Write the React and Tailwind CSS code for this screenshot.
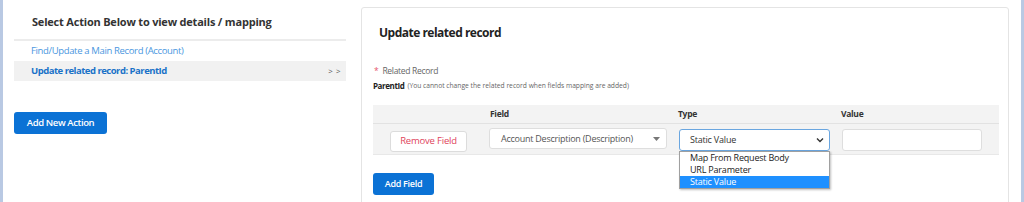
import React from "react";

const font = { fontFamily: '"Open Sans", "Noto Sans", sans-serif' };

export default function App() {
  return (
    <div className="w-[1024px] h-[202px] bg-white flex overflow-hidden text-[#333]" style={font}>
      <div className="w-[3px] h-full bg-[#b9c9e3] shrink-0" />
      {/* Left panel */}
      <div className="ml-[11px] w-[332px] shrink-0 flex flex-col">
        <div className="h-[39px] flex items-center pl-[18px] pt-[6px] text-[11px] font-bold text-[#333] tracking-[-0.2px] whitespace-nowrap">
          Select Action Below to view details / mapping
        </div>
        <div className="h-[2px] bg-[#ececec]" />
        <div className="h-[20px] flex items-center pl-[17px] text-[9.5px] tracking-[-0.35px] text-[#4a97e0] whitespace-nowrap">
          Find/Update a Main Record (Account)
        </div>
        <div className="h-[20px] flex items-center justify-between pl-[17px] pr-[5px] bg-[#f1f1f1]">
          <span className="font-bold text-[#1a72c8] text-[9.5px] tracking-[-0.5px] whitespace-nowrap">Update related record: ParentId</span>
          <span className="text-[#555] text-[8px] tracking-[0.5px]">&gt; &gt;</span>
        </div>
        <div className="mt-[27px]">
          <button className="w-[93px] h-[22px] rounded-[3px] bg-[#0b72d5] text-white text-[9.5px] tracking-[-0.4px] font-semibold">
            Add New Action
          </button>
        </div>
      </div>

      {/* Right card */}
      <div className="ml-[15px] mt-[7px] w-[648px] h-[220px] shrink-0 border border-[#e4e4e4] rounded-[3px] flex flex-col">
        <div className="pt-[15px] pl-[17px] h-[20px] box-content flex items-center text-[12px] tracking-[-0.5px] font-bold text-[#222]">
          Update related record
        </div>
        <div className="pl-[11px] flex flex-col">
          <div className="mt-[21px] h-[14px] flex items-center text-[8.5px] tracking-[-0.3px] text-[#666]">
            <span className="text-[#e5546a] mr-[4px] ml-[1px]">*</span>Related Record
          </div>
          <div className="mt-[1px] h-[14px] flex items-center whitespace-nowrap">
            <span className="text-[8px] tracking-[-0.4px] font-bold text-[#222]">ParentId</span>
            <span className="ml-[3px] text-[6.7px] text-[#666]">
              (You cannot change the related record when fields mapping are added)
            </span>
          </div>
          {/* table */}
          <div className="mt-[12px] w-[626px] bg-[#f3f3f3] relative">
            <div className="h-[19px] flex items-center text-[8.5px] tracking-[-0.3px] font-bold text-[#333] border-b border-[#e2e2e2]">
              <div className="w-[116px]" />
              <div className="w-[190px] pl-[1px]">Field</div>
              <div className="w-[163px] -ml-[1px]">Type</div>
              <div className="flex-1">Value</div>
            </div>
            <div className="h-[31px] flex items-center border-b border-[#e8e8e8]">
              <div className="w-[116px] pl-[17px]">
                <button className="w-[77px] h-[21px] bg-white border border-[#dcdcdc] rounded-[3px] text-[9.5px] tracking-[-0.2px] text-[#e0445c]">
                  Remove Field
                </button>
              </div>
              <div className="w-[190px]">
                <div className="w-[178px] h-[21px] -mt-[1px] bg-white border border-[#dedede] rounded-[3px] flex items-center justify-between pl-[11px] pr-[6px] text-[9px] tracking-[-0.25px] text-[#555] whitespace-nowrap">
                  <span>Account Description (Description)</span>
                  <svg width="7" height="4" viewBox="0 0 7 4"><path d="M0 0h7L3.5 4z" fill="#777" /></svg>
                </div>
              </div>
              <div className="w-[163px] relative">
                <div className="w-[151px] h-[22px] mt-[1px] bg-white border border-[#6aa6e0] rounded-[3px] flex items-center justify-between pl-[10px] pr-[5px] text-[9px] tracking-[-0.2px] text-[#333]">
                  <span>Static Value</span>
                  <svg width="8" height="6" viewBox="0 0 8 6"><path d="M1 1.5l3 3 3-3" stroke="#333" strokeWidth="1.4" fill="none" /></svg>
                </div>
                <div className="absolute left-0 top-[23px] w-[151px] bg-white border border-[#a0a0a0] shadow-[1px_1px_2px_rgba(0,0,0,0.25)] text-[9px] tracking-[-0.2px] text-[#222] z-10">
                  <div className="h-[12px] leading-[12px] pl-[10px]">Map From Request Body</div>
                  <div className="h-[12px] leading-[12px] pl-[10px]">URL Parameter</div>
                  <div className="h-[12px] leading-[12px] pl-[10px] bg-[#1e90ff] text-white">Static Value</div>
                </div>
              </div>
              <div className="flex-1">
                <div className="w-[140px] h-[22px] mt-[1px] bg-white border border-[#dedede] rounded-[3px]" />
              </div>
            </div>
          </div>
          <div className="mt-[14px]">
            <button className="w-[61px] h-[22px] rounded-[3px] bg-[#0b72d5] text-white text-[9px] tracking-[-0.3px] font-semibold">
              Add Field
            </button>
          </div>
        </div>
      </div>
      <div className="flex-1" />
      <div className="w-[3px] h-full bg-[#b9c9e3] shrink-0" />
    </div>
  );
}
